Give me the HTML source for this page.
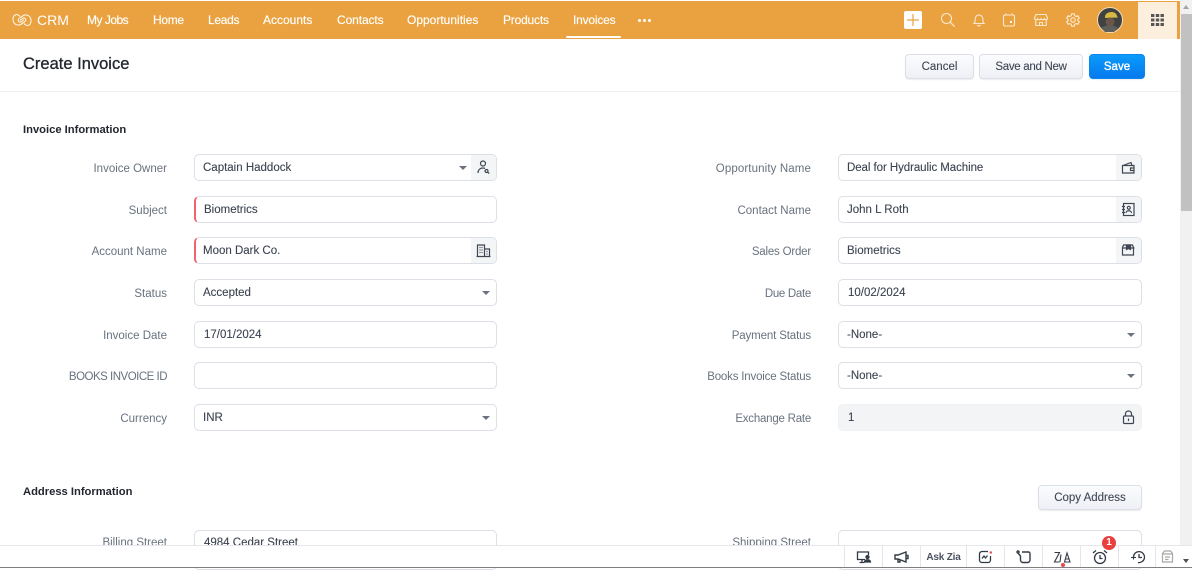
<!DOCTYPE html>
<html><head><meta charset="utf-8">
<style>
*{box-sizing:border-box}
html,body{margin:0;padding:0;width:1192px;height:568px;overflow:hidden;background:#fff;font-family:"Liberation Sans",sans-serif}
.a{position:absolute;white-space:nowrap}
.nav{top:13px;font-size:12px;line-height:14px;color:#fff;-webkit-text-stroke:.15px #fff}
.lb{font-size:11.5px;line-height:18px;color:#68727f;text-align:right;width:160px}
.f{position:absolute;width:303px;height:27px;border:1px solid #dcdfe6;border-radius:5px;background:#fff;font-size:11.5px;line-height:26px;color:#3b4250;padding-left:8px;overflow:hidden;-webkit-text-stroke:.1px #3b4250}
.f.r{width:304px}
.req{border-left:2px solid #f0636b}
.ad{position:absolute;right:0;top:0;width:25px;height:25px;background:#f4f5f7;}
.ad svg{position:absolute;left:4px;top:4px}
.car{position:absolute;width:0;height:0;border-left:4.5px solid transparent;border-right:4.5px solid transparent;border-top:4px solid #6b7280;top:11px;right:6px}
.btn{position:absolute;top:54px;height:25px;border:1px solid #dcdfe8;border-radius:4px;background:linear-gradient(#fbfcfe,#eef0f6);font-size:11.5px;line-height:25px;color:#3f4653;text-align:center;box-shadow:0 1px 1px rgba(0,0,0,.08);-webkit-text-stroke:.1px #3f4653}
.h{font-size:11.2px;font-weight:bold;color:#22262e;line-height:14px}
.ic{position:absolute;top:0;left:0}
.tb{position:absolute;top:546px;height:21px;width:38px;border-left:1px solid #e4e5e8;background:#fff}
</style></head><body>

<!-- top bar -->
<div class="a" style="left:0;top:1px;width:1180px;height:38px;background:#e9a23f"></div>
<svg class="a" style="left:12px;top:13px" width="20" height="14" viewBox="0 0 20 14" fill="none" stroke="#fff" stroke-width="1.1" opacity=".85"><path d="M8 3.500C6.500 1.500 4.500 1 3 2 .8 3.300.5 6.500 1.500 9 3 12 6.500 13 9.500 11L13 8.500c1-1 1-2.500 0-3.200-1-.8-2.200-.3-3 .5L8 7.500"/><path d="M12 10.500c1.500 2 3.500 2.500 5 1.500 2.200-1.300 2.500-4.500 1.500-7C17 2 13.500 1 10.500 3L7 5.500c-1 1-1 2.500 0 3.200 1 .8 2.200.3 3-.5l2-1.700"/></svg>
<div class="a" style="left:37px;top:12px;font-size:14px;line-height:16px;color:#fff">CRM</div>
<div class="a nav" style="left:87px;letter-spacing:-.5px">My Jobs</div>
<div class="a nav" style="left:153px;letter-spacing:-.3px">Home</div>
<div class="a nav" style="left:208px;letter-spacing:-.3px">Leads</div>
<div class="a nav" style="left:263px">Accounts</div>
<div class="a nav" style="left:337px;letter-spacing:-.1px">Contacts</div>
<div class="a nav" style="left:407px">Opportunities</div>
<div class="a nav" style="left:503px;letter-spacing:-.2px">Products</div>
<div class="a nav" style="left:573px;letter-spacing:-.2px">Invoices</div>
<div class="a" style="left:566px;top:36px;width:55px;height:2px;background:#fff;border-radius:1px"></div>
<div class="a" style="left:638px;top:19px;width:3px;height:3px;background:#fff;border-radius:50%;box-shadow:5px 0 0 #fff,10px 0 0 #fff"></div>

<div class="a" style="left:904px;top:11px;width:18px;height:18px;background:#fff;border-radius:2px"></div>
<svg class="a" style="left:904px;top:11px" width="18" height="18" fill="none" stroke="#e9a23f" stroke-width="1.2"><path d="M9 3v12M3 9h12"/></svg>
<svg class="a" style="left:940px;top:12px" width="16" height="16" fill="none" stroke="#fbe9cf" stroke-width="1.1"><circle cx="6.500" cy="6.500" r="5"/><path d="M10.200 10.200l4.500 4.500"/></svg>
<svg class="a" style="left:971px;top:12px" width="16" height="16" fill="none" stroke="#fbe9cf" stroke-width="1.1"><path d="M3 11.500c1.200-1 1-2.500 1.200-4.500C4.500 4.500 6 3 8 3s3.500 1.500 3.800 4c.2 2 0 3.500 1.200 4.500zM6.500 13c.3 1.300 2.700 1.300 3 0"/></svg>
<svg class="a" style="left:1001px;top:12px" width="16" height="16" fill="none" stroke="#fbe9cf" stroke-width="1.1"><rect x="2.500" y="3" width="11" height="11" rx="1.500"/><path d="M5 1.500V3M11 1.500V3"/><rect x="9" y="9" width="2" height="2" fill="#fff" stroke="none"/></svg>
<svg class="a" style="left:1033px;top:12px" width="16" height="16" fill="none" stroke="#fbe9cf" stroke-width="1.1"><path d="M3 2.500h10l1.500 3.500c0 2-2.500 2.200-3.300.7-.8 1.500-2.400 1.500-3.200 0-.8 1.500-2.400 1.500-3.200 0C4 8.200 1.500 8 1.500 6zM2.800 8v5.500h10.400V8M6.500 13.500V10.500h3v3"/></svg>
<svg class="a" style="left:1065px;top:12px" width="16" height="16" fill="none" stroke="#fbe9cf" stroke-width="1.1"><path d="M6.700 1.800h2.600l.4 1.800 1.500.8 1.800-.6 1.300 2.300-1.400 1.200v1.400l1.400 1.200-1.300 2.300-1.800-.6-1.500.8-.4 1.800H6.700l-.4-1.800-1.500-.8-1.800.6-1.300-2.300 1.400-1.200V7.300L1.700 6.100 3 3.800l1.800.6 1.500-.8z"/><circle cx="8" cy="8" r="2.200"/></svg>
<svg class="a" style="left:1097px;top:7px" width="26" height="26"><circle cx="13" cy="13" r="12.500" fill="#3f4240" stroke="#f3dcb8"/><path d="M8 10c0-6 11-7 12-1l1 1.500-13 .5z" fill="#d8b840"/><ellipse cx="13" cy="15" rx="4.500" ry="4.500" fill="#6b5648"/><path d="M4 21c3-3 13-4 17 0l-4 4H8z" fill="#5e5e5a"/></svg>
<div class="a" style="left:1138px;top:2px;width:39px;height:37px;background:#fcefdd"></div>
<svg class="a" style="left:1151px;top:14px" width="13" height="12" fill="#565656"><rect width="3.400" height="3"/><rect x="4.800" width="3.400" height="3"/><rect x="9.500" width="3.400" height="3"/><rect y="4.500" width="3.400" height="3"/><rect x="4.800" y="4.500" width="3.400" height="3"/><rect x="9.500" y="4.500" width="3.400" height="3"/><rect y="9" width="3.400" height="3"/><rect x="4.800" y="9" width="3.400" height="3"/><rect x="9.500" y="9" width="3.400" height="3"/></svg>

<!-- header -->
<div class="a" style="left:23px;top:55px;font-size:16.5px;line-height:18px;color:#22262e;-webkit-text-stroke:.3px #22262e">Create Invoice</div>
<div class="btn" style="left:905px;width:69px">Cancel</div>
<div class="btn" style="left:979px;width:104px;letter-spacing:-.3px">Save and New</div>
<div class="btn" style="left:1089px;width:56px;background:linear-gradient(#0a9bfa,#0679ee);border-color:#0a86f0;color:#fff;-webkit-text-stroke:.35px #fff;font-size:11.5px">Save</div>
<div class="a" style="left:0;top:91px;width:1180px;height:1px;background:#eff0f2"></div>

<!-- Invoice info -->
<div class="a h" style="left:23px;top:123px">Invoice Information</div>

<div class="a lb" style="left:7px;top:160px">Invoice Owner</div>
<div class="f" style="left:194px;top:154px">Captain Haddock<span class="car" style="right:29px"></span><span class="ad"><svg width="17" height="17" fill="none" stroke="#3f4653" stroke-width="1.2"><circle cx="8" cy="4.500" r="2.500"/><path d="M3 14c0-3 2-5 5-5 1 0 1.500.2 2 .5"/><circle cx="11.500" cy="12" r="1.500"/><path d="M12.700 13.200l1.500 1.300"/></svg></span></div>

<div class="a lb" style="left:7px;top:202px">Subject</div>
<div class="f req" style="left:194px;top:196px">Biometrics</div>

<div class="a lb" style="left:7px;top:243px">Account Name</div>
<div class="f req" style="left:194px;top:237px;padding-left:7px;line-height:27px">Moon Dark Co.<span class="ad"><svg width="17" height="17" fill="none" stroke="#3f4653" stroke-width="1.2"><path d="M2.500 14.500V3h7v11.500zM9.500 7h5v7.500h-5M1.500 14.500h14M4.500 5.500h1M6.500 5.500h1M4.500 8h1M6.500 8h1M4.500 10.500h1M6.500 10.500h1M11.500 9.500h1M11.500 12h1"/></svg></span></div>

<div class="a lb" style="left:7px;top:285px">Status</div>
<div class="f" style="left:194px;top:279px">Accepted<span class="car"></span></div>

<div class="a lb" style="left:7px;top:327px">Invoice Date</div>
<div class="f" style="left:194px;top:321px;padding-left:9px">17/01/2024</div>

<div class="a lb" style="left:7px;top:368px;letter-spacing:-.5px">BOOKS INVOICE ID</div>
<div class="f" style="left:194px;top:362px"></div>

<div class="a lb" style="left:7px;top:410px">Currency</div>
<div class="f" style="left:194px;top:404px">INR<span class="car"></span></div>

<!-- right column -->
<div class="a lb" style="left:651px;top:160px;letter-spacing:.12px">Opportunity Name</div>
<div class="f r" style="left:838px;top:154px;letter-spacing:-.07px">Deal for Hydraulic Machine<span class="ad"><svg width="17" height="17" fill="none" stroke="#3f4653" stroke-width="1.2"><path d="M3 6.500l8-3 1 3M2.500 6.500h11.500v7.500H2.500zM14 9h-3.500v2.500H14"/></svg></span></div>

<div class="a lb" style="left:651px;top:202px">Contact Name</div>
<div class="f r" style="left:838px;top:196px">John L Roth<span class="ad"><svg width="17" height="17" fill="none" stroke="#3f4653" stroke-width="1.2"><rect x="3.500" y="2.500" width="10.500" height="12"/><circle cx="8.800" cy="6.800" r="1.500"/><path d="M6 12c0-3 5.500-3 5.500 0M2 5.500h3M2 8.500h3M2 11.500h3"/></svg></span></div>

<div class="a lb" style="left:651px;top:243px;letter-spacing:-.2px">Sales Order</div>
<div class="f r" style="left:838px;top:237px;line-height:27px">Biometrics<span class="ad"><svg width="17" height="17" fill="none" stroke="#3f4653" stroke-width="1.2"><path d="M2.500 5.500l1-2.500h9l1 2.500v7.500h-11zM2.500 6h12"/><path d="M6.500 3h4v4.500L8.500 6.500l-2 1z" fill="#3f4653"/></svg></span></div>

<div class="a lb" style="left:651px;top:285px;letter-spacing:-.3px">Due Date</div>
<div class="f r" style="left:838px;top:279px;padding-left:9px">10/02/2024</div>

<div class="a lb" style="left:651px;top:327px;letter-spacing:-.14px">Payment Status</div>
<div class="f r" style="left:838px;top:321px">-None-<span class="car"></span></div>

<div class="a lb" style="left:651px;top:368px;letter-spacing:-.18px">Books Invoice Status</div>
<div class="f r" style="left:838px;top:362px">-None-<span class="car"></span></div>

<div class="a lb" style="left:651px;top:410px;letter-spacing:-.23px">Exchange Rate</div>
<div class="f r" style="left:838px;top:404px;background:#f3f4f6;border-color:#f0f1f3;padding-left:9px">1
<svg style="position:absolute;right:4px;top:4px" width="17" height="17" fill="none" stroke="#3f4653" stroke-width="1.2"><rect x="3.500" y="7" width="10" height="7.500" rx="1"/><path d="M5.500 7V5c0-4 6-4 6 0v2"/><path d="M8.500 9.500v2.500"/></svg></div>

<!-- Address -->
<div class="a h" style="left:23px;top:485px">Address Information</div>
<div class="btn" style="left:1038px;top:485px;width:104px">Copy Address</div>
<div class="a lb" style="left:7px;top:534px">Billing Street</div>
<div class="f" style="left:194px;top:530px;height:40px;padding-left:9px;line-height:25px">4984 Cedar Street</div>
<div class="a lb" style="left:651px;top:534px">Shipping Street</div>
<div class="f r" style="left:838px;top:530px;height:40px"></div>

<!-- footer -->
<div class="a" style="left:0;top:545px;width:1192px;height:23px;background:#fff;border-top:1px solid #e6e7ea"></div>
<div class="a" style="left:0;top:567px;width:1192px;height:1px;background:#7f7f7f"></div>
<div class="tb" style="left:844px"><svg class="ic" style="left:10px;top:3px" width="18" height="16" fill="none" stroke="#333a45" stroke-width="1.3"><path d="M10 10.500H2.500V3h11v3M4.500 13.500h5M7 10.500v3"/><circle cx="12.500" cy="8" r="1.500" fill="#333a45"/><path d="M9.500 13c0-3 6-3 6 0z" fill="#333a45"/></svg></div>
<div class="tb" style="left:882px"><svg class="ic" style="left:10px;top:3px" width="18" height="16" fill="none" stroke="#333a45" stroke-width="1.4"><path d="M2 6v4h3l8 3V3L5 6zM13 6.500h2v3h-2M5 10v3h2v-2.500"/></svg></div>
<div class="tb" style="left:920px;width:46px;font-size:10px;line-height:24px;font-weight:bold;color:#4b5260;text-align:center;letter-spacing:-.2px">Ask Zia</div>
<div class="tb" style="left:966px"><svg class="ic" style="left:10px;top:3px" width="18" height="16" fill="none" stroke="#333a45" stroke-width="1.3"><path d="M11 2.500H5a2.500 2.500 0 0 0-2.500 2.500v6A2.500 2.500 0 0 0 5 13.500h6a2.500 2.500 0 0 0 2.500-2.500V7M5 9.500l2-2.500 1.500 2 2-2.500"/><circle cx="13.800" cy="3.500" r="1.200" fill="#e8474c" stroke="none"/></svg></div>
<div class="tb" style="left:1004px"><svg class="ic" style="left:10px;top:3px" width="18" height="16" fill="none" stroke="#333a45" stroke-width="1.4"><path d="M7 3h6.500a1.500 1.500 0 0 1 1.500 1.500V11a2.500 2.500 0 0 1-2.500 2.500H8A2.500 2.500 0 0 1 5.500 11V7L3 4"/><circle cx="3" cy="3" r="1"/></svg></div>
<div class="tb" style="left:1042px"><svg class="ic" style="left:10px;top:3px" width="18" height="16" fill="none" stroke="#333a45" stroke-width="1.1"><path d="M1.500 3.500h5L1.500 13h5M8 5.500L7 13M11.500 13l2.500-9 3 9zM12.500 10h3.500"/></svg><div class="a" style="left:18px;top:17px;width:4px;height:4px;border-radius:50%;background:#e8474c"></div></div>
<div class="tb" style="left:1080px"><svg class="ic" style="left:10px;top:2px" width="18" height="18" fill="none" stroke="#333a45" stroke-width="1.3"><circle cx="9" cy="10" r="5.500"/><path d="M9 7v3.500h2.500M2 5l3-2.500M16 5l-3-2.500"/></svg></div>
<div class="tb" style="left:1118px;border-right:1px solid #e4e5e8"><svg class="ic" style="left:10px;top:2px" width="18" height="18" fill="none" stroke="#333a45" stroke-width="1.3"><path d="M4.500 9A5.500 5.500 0 1 1 9 14.500M10 6v3.500H13"/><path d="M2 9.500h5M4.500 7.500v4" stroke-width="1.100"/></svg></div>
<svg class="a" style="left:1160px;top:549px" width="15" height="15" fill="none" stroke="#a8a8a4" stroke-width="1.2"><path d="M2.500 4.500l2-2.500h6l2 2.500v8.500h-10zM2.500 5h10"/><path d="M5 8h5M5 10.500h3.500"/></svg>
<div class="a" style="left:1102px;top:536px;width:14px;height:14px;border-radius:50%;background:#ea3f3f;color:#fff;font-size:10px;line-height:14px;font-weight:bold;text-align:center">1</div>

<!-- scrollbar -->
<div class="a" style="left:1180px;top:0;width:12px;height:545px;background:#f1f1f1"></div>
<div class="a" style="left:1181px;top:14px;width:11px;height:197px;background:#c1c1c1"></div>
<div class="a" style="left:1183px;top:5px;width:0;height:0;border-left:3.500px solid transparent;border-right:3.500px solid transparent;border-bottom:4px solid #a3a3a3"></div>
<div class="a" style="left:1183px;top:559px;width:0;height:0;border-left:3.500px solid transparent;border-right:3.500px solid transparent;border-top:4px solid #505050"></div>

</body></html>
